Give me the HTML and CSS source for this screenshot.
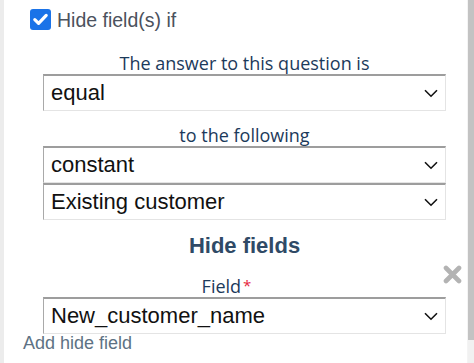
FILE: index.html
```html
<!DOCTYPE html>
<html>
<head>
<meta charset="utf-8">
<link rel="stylesheet" href="styles.css">
</head>
<body>
<div class="page">
  <label class="hide-if">
    <span class="checkbox">
      <svg width="21" height="21" viewBox="0 0 21 21"><path d="M4.8 10.6 L8.6 14.4 L16.2 6.4" fill="none" stroke="#fff" stroke-width="3.2" stroke-linecap="round" stroke-linejoin="round"/></svg>
    </span>
    <span class="hide-if-text">Hide field(s) if</span>
  </label>

  <div class="cond">
    <div class="label first">The answer to this question is</div>
    <div class="select"><span>equal</span><svg class="chev" width="14" height="9" viewBox="0 0 14 9"><path d="M1 1.2 L7 7.2 L13 1.2" fill="none" stroke="#111" stroke-width="1.6"/></svg></div>

    <div class="label second">to the following</div>
    <div class="select"><span>constant</span><svg class="chev" width="14" height="9" viewBox="0 0 14 9"><path d="M1 1.2 L7 7.2 L13 1.2" fill="none" stroke="#111" stroke-width="1.6"/></svg></div>
    <div class="select"><span>Existing customer</span><svg class="chev" width="14" height="9" viewBox="0 0 14 9"><path d="M1 1.2 L7 7.2 L13 1.2" fill="none" stroke="#111" stroke-width="1.6"/></svg></div>

    <div class="heading">Hide fields</div>

    <div class="field-block">
      <svg class="remove" width="19" height="19" viewBox="0 0 19 19"><path d="M3 3 L16 16 M16 3 L3 16" stroke="#b3b3b3" stroke-width="4.6" stroke-linecap="round"/></svg>
      <div class="label field-label">Field<span class="req">*</span></div>
      <div class="select"><span>New_customer_name</span><svg class="chev" width="14" height="9" viewBox="0 0 14 9"><path d="M1 1.2 L7 7.2 L13 1.2" fill="none" stroke="#111" stroke-width="1.6"/></svg></div>
    </div>
  </div>

  <a class="add-link">Add hide field</a>
</div>
<div class="scrollbar"><div class="thumb"></div></div>
</body>
</html>
```

FILE: styles.css
```css
html, body {
  margin: 0;
  padding: 0;
  background: #ffffff;
}
body {
  height: 363px;
  overflow: hidden;
}
.page {
  border-left: 4px solid #ececec;
  min-height: 363px;
  box-sizing: border-box;
  padding-top: 9px;
}
.hide-if {
  display: flex;
  align-items: center;
  gap: 6px;
  margin-left: 26px;
  height: 21px;
}
.checkbox {
  width: 21px;
  height: 21px;
  border-radius: 3px;
  background: #1a73e8;
  display: block;
}
.checkbox svg { display: block; }
.hide-if-text {
  font-family: "Liberation Sans", Arial, sans-serif;
  font-size: 19.5px;
  line-height: 21px;
  color: #4b525d;
  padding-top: 1px;
}
.cond {
  margin-left: 39px;
  width: 403px;
}
.label {
  font-family: "Open Sans", sans-serif;
  font-size: 18px;
  line-height: 22px;
  color: #1c3a5b;
  text-align: center;
}
.label.first { margin-top: 22px; }
.label.second { margin-top: 13px; }
.select {
  box-sizing: border-box;
  height: 37px;
  border-top: 2px solid #9d9d9d;
  border-left: 1px solid #a9a9a9;
  border-right: 1px solid #e4e4e4;
  border-bottom: 1px solid #e4e4e4;
  display: flex;
  align-items: center;
  justify-content: space-between;
  padding: 0 7px 0 7px;
  font-family: "Liberation Sans", Arial, sans-serif;
  font-size: 22px;
  line-height: 34px;
  color: #111;
  background: #fff;
}
.chev { display: block; margin-top: 1px; }
.heading {
  margin-top: 13px;
  font-family: "Liberation Sans", Arial, sans-serif;
  font-weight: bold;
  font-size: 22px;
  line-height: 26px;
  color: #2f4a66;
  text-align: center;
}
.field-block {
  position: relative;
  padding-top: 15px;
}
.remove {
  position: absolute;
  right: -16px;
  top: 6px;
}
.field-label {
  padding-right: 36px;
}
.req {
  color: #e5253c;
  font-size: 15px;
  margin-left: 2px;
  vertical-align: 2px;
}
.add-link {
  display: block;
  margin-left: 19px;
  font-family: "Liberation Sans", Arial, sans-serif;
  font-size: 18px;
  line-height: 18px;
  color: #5e7284;
}
.scrollbar {
  position: fixed;
  top: 0;
  right: 0;
  width: 6px;
  height: 363px;
  background: #f1f1f1;
  border-left: 1px solid #f4f4f4;
}
.thumb {
  height: 340px;
  background: #c3c3c3;
}
```
